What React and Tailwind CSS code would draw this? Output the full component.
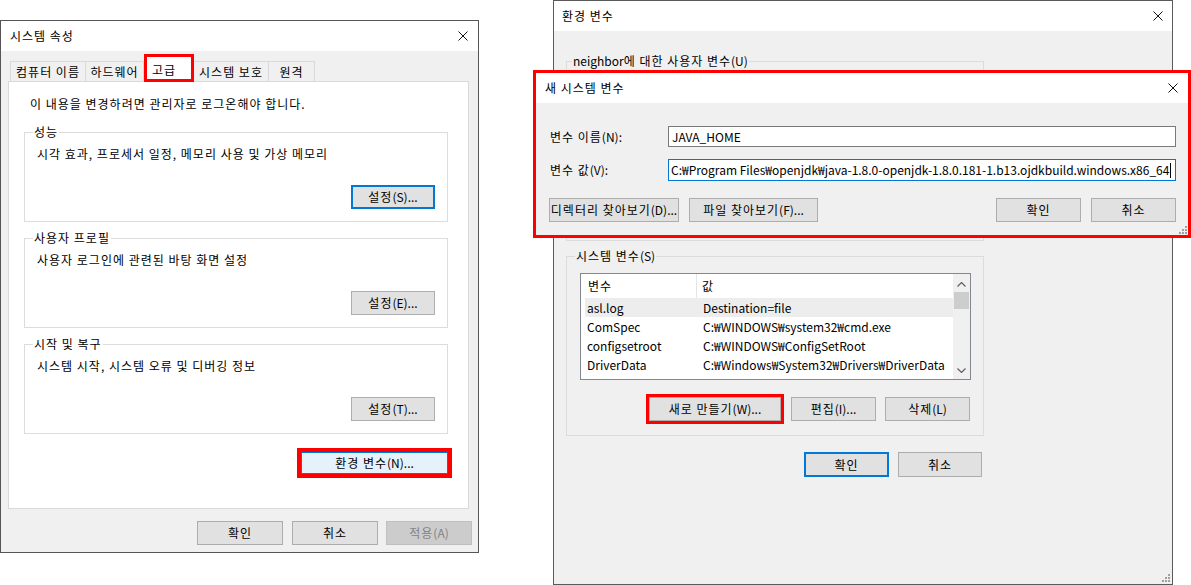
import React from "react";

const HANGUL = /([\uAC00-\uD7A3][\uAC00-\uD7A3\s,.]*)/;

function T({ children }) {
  if (typeof children !== "string") return children;
  const parts = children.split(HANGUL);
  return parts.map((p, i) =>
    /[\uAC00-\uD7A3]/.test(p) ? (
      <span key={i} className="tracking-[1px]">
        {p}
      </span>
    ) : (
      <React.Fragment key={i}>{p}</React.Fragment>
    )
  );
}

const CloseX = () => (
  <svg width="10" height="10" viewBox="0 0 10 10" className="block">
    <path d="M0.5 0.5L9.5 9.5M9.5 0.5L0.5 9.5" stroke="#111" strokeWidth="1" />
  </svg>
);

const Grip = () => (
  <svg width="8" height="8" viewBox="0 0 8 8" className="block">
    <rect x="6" y="0" width="2" height="2" fill="#a0a0a0" />
    <rect x="3" y="3" width="2" height="2" fill="#a0a0a0" />
    <rect x="6" y="3" width="2" height="2" fill="#a0a0a0" />
    <rect x="0" y="6" width="2" height="2" fill="#a0a0a0" />
    <rect x="3" y="6" width="2" height="2" fill="#a0a0a0" />
    <rect x="6" y="6" width="2" height="2" fill="#a0a0a0" />
  </svg>
);

const TONES = {
  normal: "border border-[#adadad] bg-[#e1e1e1] text-black",
  focus: "border-2 border-[#0078d7] bg-[#e1e1e1] text-black",
  disabled: "border border-[#bfbfbf] bg-[#cccccc] text-[#838383]",
  hover: "border border-[#0078d7] bg-[#e5f1fb] text-black",
};

function Btn({ children, className = "", tone = "normal" }) {
  return (
    <div
      className={
        "flex items-center justify-center text-[12px] leading-[16px] shrink-0 whitespace-nowrap " +
        TONES[tone] +
        " " +
        className
      }
    >
      <T>{children}</T>
    </div>
  );
}

function Group({ label, className = "", labelLeft = "left-[8px]", labelBg = "bg-white", children }) {
  return (
    <div className={"relative border border-[#dcdcdc] flex flex-col " + className}>
      <span className={"absolute -top-[9px] px-[1px] leading-[16px] whitespace-nowrap " + labelLeft + " " + labelBg}>
        <T>{label}</T>
      </span>
      {children}
    </div>
  );
}

function PerfGroup({ label, desc, btn, focused }) {
  return (
    <Group label={label} className="w-[424px] h-[90px] bg-white">
      <div className="pl-[12px] pt-[13px] leading-[16px]">
        <T>{desc}</T>
      </div>
      <div className="mt-auto flex justify-end pr-[12px] pb-[12px]">
        <Btn className="w-[84px] h-[24px]" tone={focused ? "focus" : "normal"}>
          {btn}
        </Btn>
      </div>
    </Group>
  );
}

const rows = [
  ["asl.log", "Destination=file", true],
  ["ComSpec", "C:₩WINDOWS₩system32₩cmd.exe", false],
  ["configsetroot", "C:₩WINDOWS₩ConfigSetRoot", false],
  ["DriverData", "C:₩Windows₩System32₩Drivers₩DriverData", false],
];

function Tab({ children, className }) {
  return (
    <div className={"h-[20px] border-t border-r border-[#d9d9d9] flex items-center justify-center whitespace-nowrap " + className}>
      <T>{children}</T>
    </div>
  );
}

export default function App() {
  return (
    <div className="relative w-[1191px] h-[585px] bg-white overflow-hidden text-[12px] leading-[16px] text-black font-['Noto_Sans_CJK_KR','Noto_Sans',sans-serif]">
      {/* 시스템 속성 */}
      <div className="absolute left-0 top-[20px] w-[479px] h-[533px] border border-[#555555] bg-[#f0f0f0] flex flex-col">
        <div className="h-[30px] bg-white flex items-center justify-between pl-[9px] pr-[10px] shrink-0">
          <span>
            <T>시스템 속성</T>
          </span>
          <CloseX />
        </div>
        <div className="px-[7px] pt-[3px] flex flex-col">
          <div className="flex items-end pl-[2px] h-[27px] relative z-10">
            <Tab className="w-[76px] border-l">컴퓨터 이름</Tab>
            <Tab className="w-[58px]">하드웨어</Tab>
            <div className="w-[50px] h-[28px] -mb-[1px] border-[3px] border-[#ff0000] bg-white pl-[5px] pt-[5px]">
              <T>고급</T>
            </div>
            <Tab className="w-[75px]">시스템 보호</Tab>
            <Tab className="w-[46px]">원격</Tab>
          </div>
          <div className="w-[461px] h-[428px] bg-white border border-[#d9d9d9] pl-[15px] pt-[14px] flex flex-col">
            <div className="pl-[6px]">
              <T>이 내용을 변경하려면 관리자로 로그온해야 합니다.</T>
            </div>
            <div className="mt-[20px] flex flex-col gap-[16px]">
              <PerfGroup label="성능" desc="시각 효과, 프로세서 일정, 메모리 사용 및 가상 메모리" btn="설정(S)..." focused />
              <PerfGroup label="사용자 프로필" desc="사용자 로그인에 관련된 바탕 화면 설정" btn="설정(E)..." />
              <PerfGroup label="시작 및 복구" desc="시스템 시작, 시스템 오류 및 디버깅 정보" btn="설정(T)..." />
            </div>
            <div className="w-[424px] mt-[14px] flex justify-end">
              <div className="-mr-[4px] w-[155px] h-[30px] border-[4px] border-[#ff0000]">
                <Btn className="w-full h-full" tone="hover">
                  환경 변수(N)...
                </Btn>
              </div>
            </div>
          </div>
          <div className="mt-[12px] -mr-[1px] flex justify-end">
            <Btn className="w-[86px] h-[24px]">확인</Btn>
            <Btn className="w-[86px] h-[24px] ml-[9px]">취소</Btn>
            <Btn className="w-[86px] h-[24px] ml-[8px]" tone="disabled">
              적용(A)
            </Btn>
          </div>
        </div>
      </div>

      {/* 환경 변수 */}
      <div className="absolute left-[553px] top-0 w-[620px] h-[585px] border border-[#5a5a5a] bg-[#f0f0f0] flex flex-col">
        <div className="h-[30px] bg-white flex items-center justify-between pl-[8px] pr-[9px] shrink-0">
          <span>
            <T>환경 변수</T>
          </span>
          <CloseX />
        </div>
        <div className="pl-[12px] pt-[30px] flex flex-col">
          <Group label="neighbor에 대한 사용자 변수(U)" labelLeft="left-[5px]" labelBg="bg-[#f0f0f0]" className="w-[418px] h-[180px]" />
          <Group label="시스템 변수(S)" labelBg="bg-[#f0f0f0]" className="w-[418px] h-[180px] mt-[15px]">
            <div className="ml-[13px] mt-[16px] w-[391px] h-[107px] border border-[#828790] bg-white flex overflow-hidden">
              <div className="flex-1 flex flex-col">
                <div className="h-[24px] flex shrink-0">
                  <div className="w-[116px] pl-[7px] flex items-center border-r border-[#e5e5e5]">
                    <T>변수</T>
                  </div>
                  <div className="pl-[5px] flex items-center">
                    <T>값</T>
                  </div>
                </div>
                <div className="pl-[4px] flex flex-col">
                  {rows.map(([k, v, sel]) => (
                    <div key={k} className={"h-[19px] flex items-center whitespace-nowrap " + (sel ? "bg-[#ededed]" : "")}>
                      <div className="w-[112px] pl-[2px]">{k}</div>
                      <div className="pl-[6px]">{v}</div>
                    </div>
                  ))}
                </div>
              </div>
              <div className="w-[17px] bg-[#f0f0f0] flex flex-col items-center shrink-0">
                <svg width="9" height="5" viewBox="0 0 9 5" className="mt-[8px] block">
                  <path d="M0.5 4.5L4.5 0.5L8.5 4.5" stroke="#606060" fill="none" strokeWidth="1.2" />
                </svg>
                <div className="mt-[5px] w-[15px] h-[17px] bg-[#cdcdcd]" />
                <svg width="9" height="5" viewBox="0 0 9 5" className="mt-auto mb-[6px] block">
                  <path d="M0.5 0.5L4.5 4.5L8.5 0.5" stroke="#606060" fill="none" strokeWidth="1.2" />
                </svg>
              </div>
            </div>
            <div className="mt-[14px] pr-[13px] flex justify-end items-center">
              <div className="w-[138px] h-[30px] border-[3px] border-[#ff0000]">
                <Btn className="w-full h-full">새로 만들기(W)...</Btn>
              </div>
              <Btn className="w-[85px] h-[24px] ml-[7px]">편집(I)...</Btn>
              <Btn className="w-[85px] h-[24px] ml-[9px]">삭제(L)</Btn>
            </div>
          </Group>
          <div className="w-[418px] mt-[16px] pr-[2px] flex justify-end">
            <Btn className="w-[85px] h-[25px]" tone="focus">
              확인
            </Btn>
            <Btn className="w-[84px] h-[25px] ml-[9px]">취소</Btn>
          </div>
        </div>
        <div className="absolute right-[2px] bottom-[2px]">
          <Grip />
        </div>
      </div>

      {/* 새 시스템 변수 */}
      <div className="absolute left-[533px] top-[70px] w-[658px] h-[168px] border-[3px] border-[#ff0000] bg-[#f0f0f0] flex flex-col">
        <div className="h-[30px] bg-white flex items-center justify-between pl-[9px] pr-[10px] shrink-0">
          <span>
            <T>새 시스템 변수</T>
          </span>
          <CloseX />
        </div>
        <div className="pl-[13px] pr-[12px] pt-[23px] flex flex-col">
          <div className="flex items-center h-[21px]">
            <div className="w-[119px] pl-[1px] shrink-0">
              <T>변수 이름(N):</T>
            </div>
            <div className="flex-1 h-[21px] border border-[#7a7a7a] bg-white pl-[3px] flex items-center">JAVA_HOME</div>
          </div>
          <div className="flex items-center h-[22px] mt-[12px]">
            <div className="w-[119px] pl-[1px] shrink-0">
              <T>변수 값(V):</T>
            </div>
            <div className="flex-1 h-[22px] border border-[#0078d7] bg-white pl-[2px] flex items-center whitespace-nowrap overflow-hidden">
              <span>C:₩Program Files₩openjdk₩java-1.8.0-openjdk-1.8.0.181-1.b13.ojdkbuild.windows.x86_64</span>
              <span className="ml-[1px] w-[1px] h-[15px] bg-black shrink-0" />
            </div>
          </div>
          <div className="mt-[17px] flex items-center">
            <Btn className="w-[130px] h-[24px]">디렉터리 찾아보기(D)...</Btn>
            <Btn className="w-[129px] h-[24px] ml-[10px]">파일 찾아보기(F)...</Btn>
            <div className="flex-1" />
            <Btn className="w-[85px] h-[24px]">확인</Btn>
            <Btn className="w-[85px] h-[24px] ml-[10px]">취소</Btn>
          </div>
        </div>
        <div className="absolute right-[1px] bottom-[1px]">
          <Grip />
        </div>
      </div>
    </div>
  );
}
